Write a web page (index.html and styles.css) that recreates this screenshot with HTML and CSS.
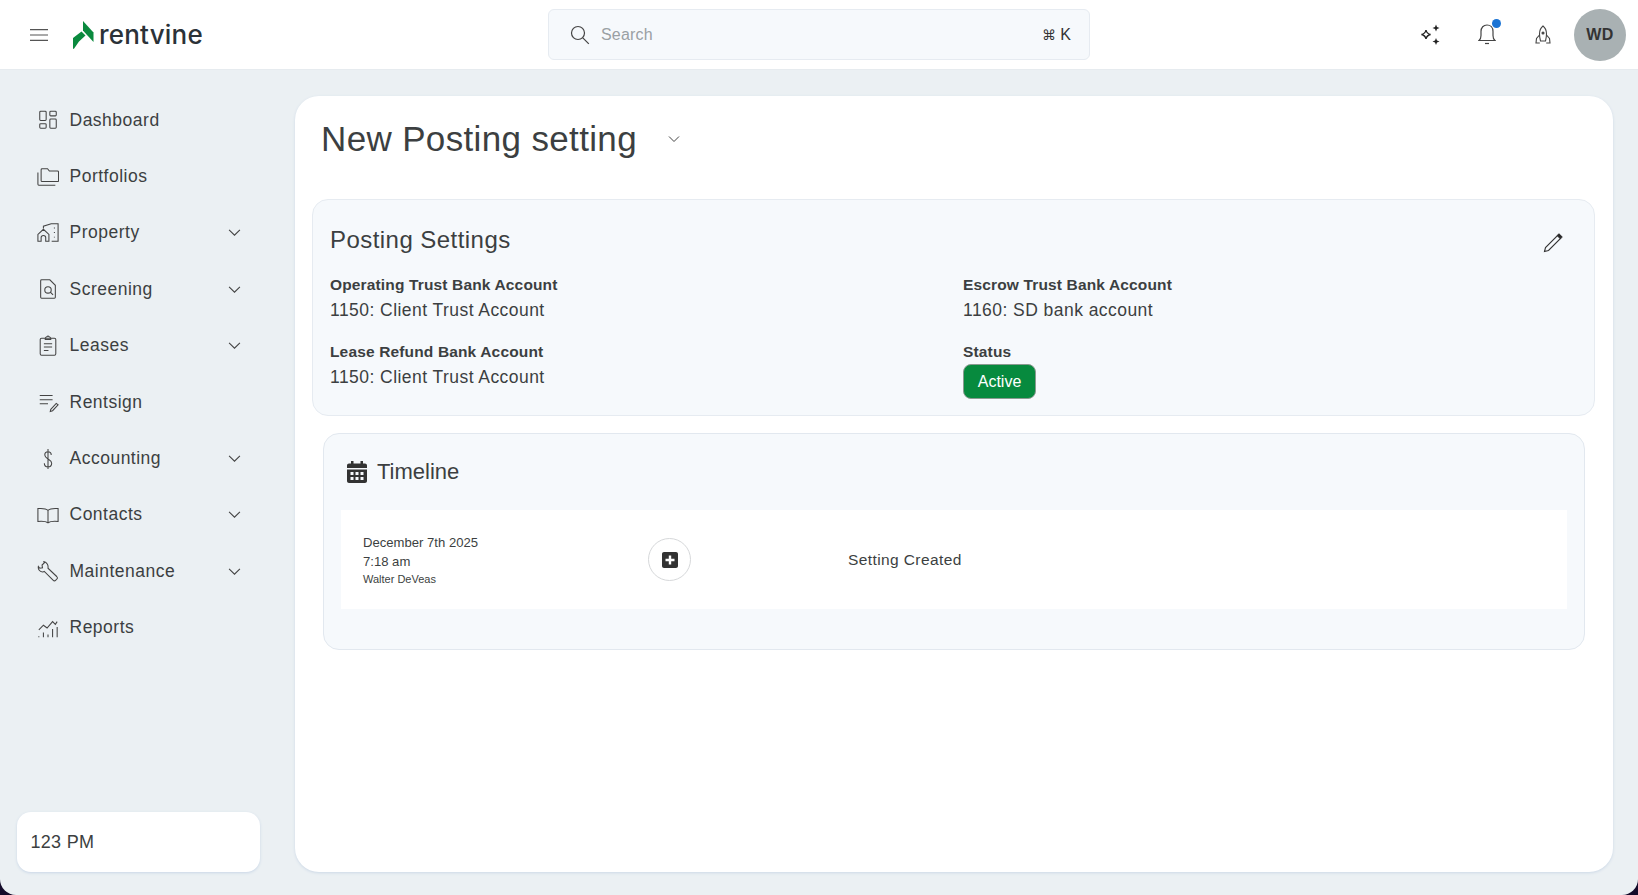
FILE: index.html
```html
<!DOCTYPE html>
<html lang="en">
<head>
    <meta charset="UTF-8">
    <meta name="viewport" content="width=device-width, initial-scale=1.0">
    <title>New Posting setting</title>
    <link rel="stylesheet" href="styles.css">
</head>
<body>
<div class="app">
    <header class="top_bar">
        <div class="top_left">
            <svg class="menu_icon" width="18" height="12" viewBox="0 0 18 12" fill="none" stroke="#555" stroke-width="1.2"><path d="M0 .6h18M0 6h18M0 11.4h18"/></svg>
            <div class="logo">
                <svg width="21" height="28" viewBox="0 0 21 28"><path d="M10 0l10.500 11.500V21L14 14 10 9.500z" fill="#0a8a3e"/><path d="M8.500 10.500l4 4L6 20.500.8 28 0 27.500V17z" fill="#0a8a3e"/></svg>
                <span class="logo_text">rentvine</span>
            </div>
        </div>
        <div class="search">
            <svg width="20" height="20" viewBox="0 0 20 20" fill="none" stroke="#444" stroke-width="1.2"><circle cx="8" cy="8" r="6.500"/><path d="M12.800 12.800l6 6"/></svg>
            <span class="search_text">Search</span>
            <span class="search_key"><span class="cmd">⌘</span> K</span>
        </div>
        <div class="top_right">
            <svg class="top_icon" width="21" height="21" viewBox="0 0 21 21" fill="none" stroke="#222" stroke-width="1.400"><path d="M7 6c.5 2.800 1.500 3.800 4.500 4.500C8.500 11.200 7.500 12.200 7 15c-.5-2.800-1.500-3.800-4.500-4.500C5.500 9.800 6.500 8.800 7 6z"/><path d="M17 .5l1 2.500 2.500 1-2.500 1-1 2.500-1-2.500-2.500-1 2.500-1zM17 14l1 2.500 2.500 1-2.500 1-1 2.500-1-2.500-2.500-1 2.500-1z" fill="#222" stroke="none"/></svg>
            <div class="bell">
                <svg width="18" height="21" viewBox="0 0 18 21" fill="none" stroke="#444" stroke-width="1.200"><path d="M1 16.500c1.500-1 2-2.500 2-5V7.500C3 3.500 5.500 1 9 1s6 2.500 6 6.500v4c0 2.500.5 4 2 5z"/><path d="M7 19.500h4"/></svg>
                <span class="bell_dot"></span>
            </div>
            <svg class="top_icon" width="16" height="20" viewBox="0 0 16 20" fill="none" stroke="#444" stroke-width="1.100"><path d="M8 1c2.500 2 3.500 5 3.500 8 0 3-.5 5-1 7h-5c-.5-2-1-4-1-7 0-3 1-6 3.500-8z"/><circle cx="8" cy="8" r="1" fill="#444"/><path d="M4.500 10L1.500 13.500 1 18h3.800M11.500 10l3 3.500.5 4.500h-3.800"/></svg>
            <div class="avatar">WD</div>
        </div>
    </header>

    <div class="body_row">
        <aside class="side_bar">
            <nav class="nav_list">
                <a class="nav_item">
                    <svg class="nav_icon" viewBox="0 0 24 24"><rect x="3" y="2.500" width="7" height="10" rx="1"/><rect x="14" y="2.500" width="7" height="5" rx="1"/><rect x="3" y="16" width="7" height="5" rx="1"/><rect x="14" y="11" width="7" height="10" rx="1"/></svg>
                    <span class="nav_text">Dashboard</span>
                </a>
                <a class="nav_item">
                    <svg class="nav_icon" viewBox="0 0 24 24"><path d="M4.500 16V4c0-.6.4-1 1-1h6l2 2.500h9c.6 0 1 .4 1 1V16c0 .6-.4 1-1 1h-17c-.6 0-1-.4-1-1z"/><path d="M1 7v13c0 .6.4 1 1 1h18"/></svg>
                    <span class="nav_text">Portfolios</span>
                </a>
                <a class="nav_item">
                    <svg class="nav_icon" viewBox="0 0 24 24"><path d="M1 21v-7.500L7 8l6 5.500V21H9.500v-4c0-3-5-3-5 0v4z"/><path d="M7 7V4.500L15.500 2 H23v19h-7"/><path d="M19 6v1M19 11v1M19 16v1"/></svg>
                    <span class="nav_text">Property</span>
                    <svg class="nav_caret" viewBox="0 0 12 8"><path d="M1 1.500l5 5 5-5"/></svg>
                </a>
                <a class="nav_item">
                    <svg class="nav_icon" viewBox="0 0 24 24"><path d="M4 3c0-.6.4-1 1-1h9l6 6v13c0 .6-.4 1-1 1H5c-.6 0-1-.4-1-1z"/><circle cx="12" cy="13" r="3.500"/><path d="M14.500 15.500l3 3"/></svg>
                    <span class="nav_text">Screening</span>
                    <svg class="nav_caret" viewBox="0 0 12 8"><path d="M1 1.500l5 5 5-5"/></svg>
                </a>
                <a class="nav_item">
                    <svg class="nav_icon" viewBox="0 0 24 24"><rect x="3.500" y="3.500" width="17" height="18.500" rx="1.500"/><path d="M9 3.500C9 2.500 10 2 12 1c2 1 3 1.500 3 2.500V5H9zM7.500 9.500h9M7.500 13h9M7.500 17h5"/></svg>
                    <span class="nav_text">Leases</span>
                    <svg class="nav_caret" viewBox="0 0 12 8"><path d="M1 1.500l5 5 5-5"/></svg>
                </a>
                <a class="nav_item">
                    <svg class="nav_icon" viewBox="0 0 24 24"><path d="M3 5h14M3 9.500h14M3 14h9"/><path d="M15 20l6-6.500 2 1.500-6 6.500-2.500.8z"/></svg>
                    <span class="nav_text">Rentsign</span>
                </a>
                <a class="nav_item">
                    <svg class="nav_icon" viewBox="0 0 24 24"><path d="M15.500 7.500c0-2.200-1.500-3.500-3.500-3.500S8.500 5.300 8.500 7.500 10.500 11 12 12s4 2 4 4.500-1.800 4-4 4-4-1.500-4-4M12 1v22"/></svg>
                    <span class="nav_text">Accounting</span>
                    <svg class="nav_caret" viewBox="0 0 12 8"><path d="M1 1.500l5 5 5-5"/></svg>
                </a>
                <a class="nav_item">
                    <svg class="nav_icon" viewBox="0 0 24 24"><path d="M12 7C10 5 7 4.500 1 5v14c6-.5 9 0 11 1.500 2-1.500 5-2 11-1.500V5c-6-.5-9 0-11 2zM12 7v13.500"/></svg>
                    <span class="nav_text">Contacts</span>
                    <svg class="nav_caret" viewBox="0 0 12 8"><path d="M1 1.500l5 5 5-5"/></svg>
                </a>
                <a class="nav_item">
                    <svg class="nav_icon" viewBox="0 0 24 24"><path d="M8.500 2.500l-3 3 .5 3-3 .5-1.500-2C1 9.500 2.500 13 6 13c1 0 1.500 0 2-.5l9.500 9.500c1 1 2 1 3 0l1-1c1-1 1-2 0-3L12 9c.5-3-1-7-5-7z"/></svg>
                    <span class="nav_text">Maintenance</span>
                    <svg class="nav_caret" viewBox="0 0 12 8"><path d="M1 1.500l5 5 5-5"/></svg>
                </a>
                <a class="nav_item">
                    <svg class="nav_icon" viewBox="0 0 24 24"><path d="M2 14l5-5 4 3 6-7 3 3 2-3"/><path d="M2 21v1M7 17v5M12 19v3M17 13v9M22 11v11"/></svg>
                    <span class="nav_text">Reports</span>
                </a>
            </nav>
            <div class="clock_box">123 PM</div>
        </aside>

        <main class="main_card">
            <div class="page_title">
                <h1>New Posting setting</h1>
                <svg class="title_caret" viewBox="0 0 12 8"><path d="M1 1.500l5 5 5-5"/></svg>
            </div>

            <section class="setting_card">
                <div class="setting_head">
                    <h2>Posting Settings</h2>
                    <svg class="edit_icon" width="20" height="20" viewBox="0 0 20 20" fill="none" stroke="#333" stroke-width="1.100"><path d="M1.500 18.500l1-4L14.500 2.500l3 3-12 12z"/><path d="M14.500 2.500l1.500-1.500 3 3-1.500 1.500z" fill="#222"/></svg>
                </div>
                <div class="setting_grid">
                    <div class="field">
                        <div class="field_label">Operating Trust Bank Account</div>
                        <div class="field_value">1150: Client Trust Account</div>
                    </div>
                    <div class="field">
                        <div class="field_label">Escrow Trust Bank Account</div>
                        <div class="field_value">1160: SD bank account</div>
                    </div>
                    <div class="field">
                        <div class="field_label">Lease Refund Bank Account</div>
                        <div class="field_value">1150: Client Trust Account</div>
                    </div>
                    <div class="field">
                        <div class="field_label">Status</div>
                        <div class="badge">Active</div>
                    </div>
                </div>
            </section>

            <section class="timeline_card">
                <div class="timeline_head">
                    <svg width="20" height="22" viewBox="0 0 20 22"><path fill="#333" fill-rule="evenodd" d="M4 0h2.500v2.500h7V0H16v2.500h2c1.100 0 2 .9 2 2V7H0V4.500c0-1.100.9-2 2-2h2zM0 8.500h20V20c0 1.100-.9 2-2 2H2c-1.100 0-2-.9-2-2zM3.500 11v3h3v-3zm5 0v3h3v-3zm5 0v3h3v-3zm-10 5v3h3v-3zm5 0v3h3v-3zm5 0v3h3v-3z"/></svg>
                    <h3>Timeline</h3>
                </div>
                <div class="timeline_row">
                    <div class="timeline_when">
                        <div class="when_date">December 7th 2025</div>
                        <div class="when_time">7:18 am</div>
                        <div class="when_user">Walter DeVeas</div>
                    </div>
                    <div class="timeline_dot">
                        <svg width="16" height="16" viewBox="0 0 16 16"><path fill="#333" fill-rule="evenodd" d="M2 0h12c1.100 0 2 .9 2 2v12c0 1.100-.9 2-2 2H2c-1.100 0-2-.9-2-2V2C0 .9.900 0 2 0zm4.800 3.500v3.300H3.500v2.400h3.300v3.300h2.400V9.200h3.300V6.800H9.200V3.500z"/></svg>
                    </div>
                    <div class="timeline_msg">Setting Created</div>
                </div>
            </section>
        </main>
    </div>
</div>
</body>
</html>
```

FILE: styles.css
```css
*{
    box-sizing: border-box;
}
html,body{
    margin: 0;
    height: 100%;
    background: #140b2a;
}
body{
    font-family: "Liberation Sans", Arial, sans-serif;
    color: #3c3f41;
    overflow: hidden;
}
h1,h2,h3{
    margin: 0;
    font-weight: 400;
}
.app{
    height: 895px;
    display: flex;
    flex-direction: column;
    background: #ebf0f3;
    border-radius: 0 0 16px 16px;
    overflow: hidden;
}

/* top bar */
.top_bar{
    height: 70px;
    flex: none;
    display: grid;
    grid-template-columns: 1fr 542px 1fr;
    align-items: center;
    background: #fff;
    border-bottom: 1px solid #e6ebef;
}
.top_left{
    display: flex;
    align-items: center;
    padding-left: 30px;
}
.menu_icon{
    margin-right: 25px;
}
.logo{
    display: flex;
    align-items: center;
    gap: 5px;
}
.logo_text{
    font-family: Inter, sans-serif;
    font-size: 26px;
    font-weight: 500;
    color: #2b3238;
    letter-spacing: 0.2px;
}
.search{
    height: 51px;
    display: flex;
    align-items: center;
    padding: 0 18px 0 21px;
    background: #f6f9fc;
    border: 1px solid #e6ebf1;
    border-radius: 6px;
}
.search_text{
    margin-left: 11px;
    font-size: 16px;
    letter-spacing: 0.2px;
    color: #9aa0a4;
}
.search_key{
    margin-left: auto;
    font-size: 16px;
    color: #333;
}
.cmd{
    font-family: "DejaVu Sans", sans-serif;
    font-size: 14px;
}
.top_right{
    display: flex;
    align-items: center;
    justify-content: flex-end;
    padding-right: 12px;
}
.top_icon{
    flex: none;
}
.bell{
    position: relative;
    display: flex;
    margin: 0 39px 0 38px;
}
.bell_dot{
    position: absolute;
    top: -5px;
    right: -5px;
    width: 9px;
    height: 9px;
    background: #1a73d4;
    border-radius: 50%;
}
.avatar{
    width: 52px;
    height: 52px;
    margin-left: 23px;
    display: flex;
    align-items: center;
    justify-content: center;
    background: #a9b1b3;
    border-radius: 50%;
    font-size: 16px;
    font-weight: 700;
    letter-spacing: 0.5px;
    color: #333;
}

/* sidebar + main */
.body_row{
    flex: 1;
    min-height: 0;
    display: flex;
}
.side_bar{
    width: 295px;
    flex: none;
    display: flex;
    flex-direction: column;
    justify-content: space-between;
    padding: 22px 35px 23px 17px;
}
.nav_list{
    margin-right: 17px;
}
.nav_item{
    height: 56.4px;
    display: flex;
    align-items: center;
    padding-left: 20px;
    font-size: 17.500px;
    letter-spacing: 0.5px;
}
.nav_icon{
    width: 22px;
    height: 22px;
    margin-right: 10.500px;
    fill: none;
    stroke: #444;
    stroke-width: 1.150;
}
.nav_caret{
    width: 13px;
    height: 9px;
    margin-left: auto;
    margin-right: 2px;
    fill: none;
    stroke: #444;
    stroke-width: 1;
}
.clock_box{
    height: 60px;
    display: flex;
    align-items: center;
    padding-left: 13.500px;
    background: #fff;
    border-radius: 14px;
    box-shadow: 0 1px 3px #c9d6e6;
    font-size: 18px;
    letter-spacing: 0.3px;
}
.main_card{
    flex: 1;
    margin: 26px 25px 23px 0;
    padding: 0 18px 0 17px;
    background: #fff;
    border-radius: 24px;
    box-shadow: 0 1px 3px #ccd8e6;
}
.page_title{
    height: 103px;
    display: flex;
    align-items: center;
    padding: 0 0 17px 9px;
}
.page_title h1{
    font-size: 35px;
    letter-spacing: 0.35px;
}
.title_caret{
    width: 12px;
    height: 8px;
    margin-left: 31px;
    fill: none;
    stroke: #444;
    stroke-width: 1;
}

/* posting settings */
.setting_card{
    height: 217px;
    padding: 25px 18px 0 17px;
    background: #f6f9fc;
    border: 1px solid #e6ebf1;
    border-radius: 16px;
}
.setting_head{
    display: flex;
    align-items: center;
    justify-content: space-between;
    padding-right: 13px;
    height: 30px;
}
.setting_head h2{
    font-size: 24px;
    letter-spacing: 0.45px;
}
.edit_icon{
    margin-top: 6px;
}
.setting_grid{
    display: grid;
    grid-template-columns: 633px 1fr;
    row-gap: 22px;
    margin-top: 20px;
}
.field_label{
    font-size: 15.500px;
    font-weight: 700;
    letter-spacing: 0.15px;
    line-height: 20px;
}
.field_value{
    margin-top: 5px;
    font-size: 17.500px;
    letter-spacing: 0.45px;
    line-height: 20px;
}
.badge{
    width: 73px;
    height: 35px;
    margin-top: 2px;
    display: flex;
    align-items: center;
    justify-content: center;
    background: #078a3e;
    border: 1px solid #8a9a90;
    border-radius: 8px;
    color: #fff;
    font-size: 16px;
}

/* timeline */
.timeline_card{
    height: 217px;
    margin: 17px 10px 0 11px;
    padding: 0 17px;
    background: #f6f9fc;
    border: 1px solid #e2e8ef;
    border-radius: 16px;
}
.timeline_head{
    height: 76px;
    display: flex;
    align-items: center;
    gap: 10px;
    padding-left: 6px;
}
.timeline_head h3{
    font-size: 22px;
}
.timeline_row{
    height: 99px;
    display: grid;
    grid-template-columns: 285px 43px 1fr;
    align-items: center;
    padding-left: 22px;
    background: #fff;
}
.when_date,.when_time{
    font-size: 13.100px;
    line-height: 19px;
}
.when_user{
    font-size: 11px;
    line-height: 16px;
}
.timeline_dot{
    width: 43px;
    height: 43px;
    display: flex;
    align-items: center;
    justify-content: center;
    background: #fff;
    border: 1px solid #d6d8da;
    border-radius: 50%;
}
.timeline_msg{
    padding-left: 157px;
    font-size: 15.500px;
    letter-spacing: 0.4px;
}
```
